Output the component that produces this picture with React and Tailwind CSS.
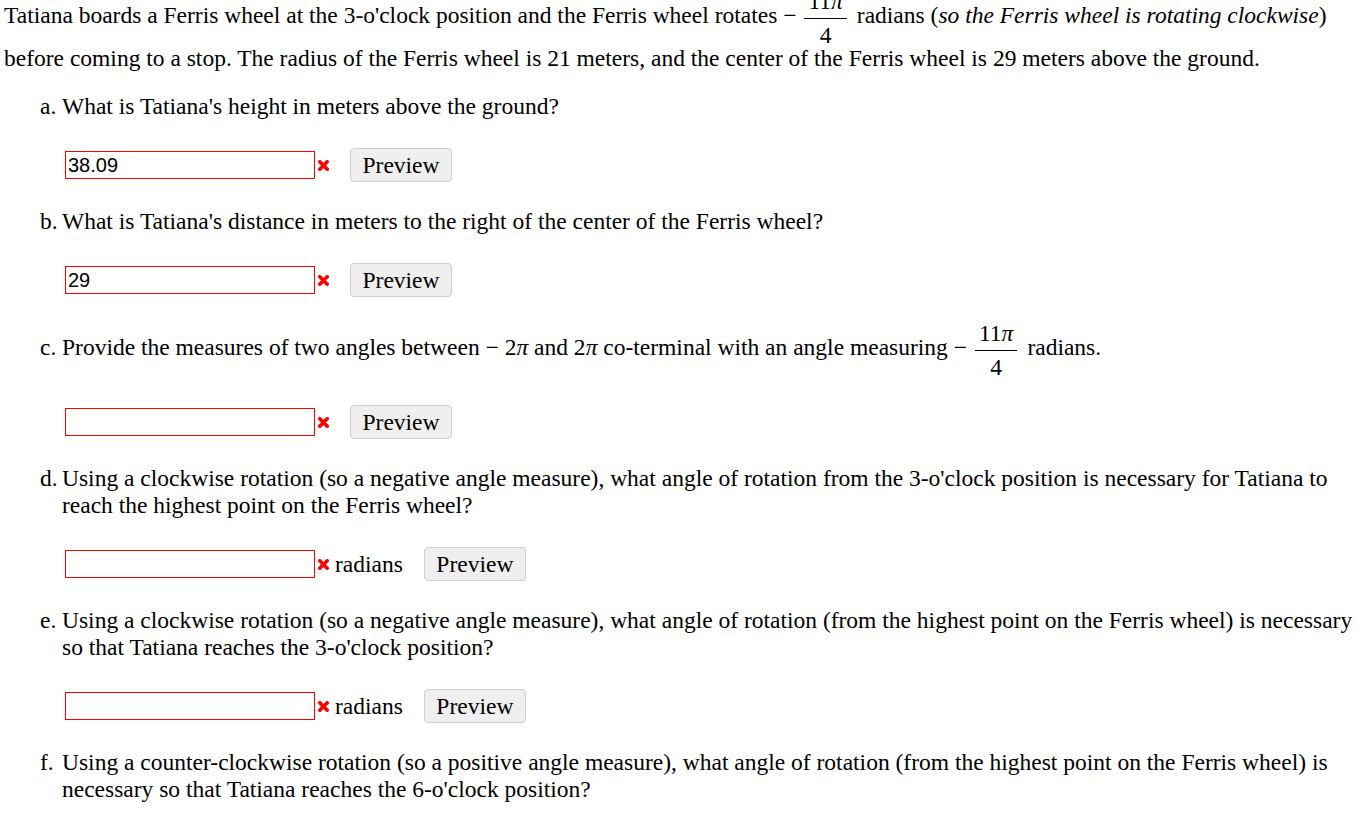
function Frac({ num, den }) {
  return (
    <span className="inline-flex flex-col items-center align-middle ml-[8px] mr-[10px]">
      <span className="block h-[20px] leading-[20px] mb-[7px] px-[4px]">{num}</span>
      <span className="block h-px w-full bg-black" />
      <span className="block h-[20px] leading-[20px] mt-[6px]">{den}</span>
    </span>
  )
}

const Pi = () => <i>π</i>

function Cross() {
  return (
    <svg width="11" height="11" viewBox="0 0 11 11" className="ml-[3px] mt-[1px]">
      <path d="M1.8 1.8 L9.2 9.2 M9.2 1.8 L1.8 9.2" stroke="#ff0000" strokeWidth="3.6" strokeLinecap="round" />
    </svg>
  )
}

function Answer({ value = '', radians = false }) {
  return (
    <div className="flex items-center ml-[3px] mt-[28px] h-[34px]">
      <input
        readOnly
        value={value}
        className="w-[250px] h-[28px] border border-[#ff0000] px-[2px] text-[20px] font-['Liberation_Sans'] text-black outline-none"
      />
      <Cross />
      {radians && <span className="ml-[6px]">radians</span>}
      <button className="ml-[21px] h-[34px] w-[102px] rounded-[4px] border border-[#cfcfcf] bg-[#efefef] text-black font-['Liberation_Serif']">
        Preview
      </button>
    </div>
  )
}

function Item({ mark, children, value, radians }) {
  return (
    <div className="flex items-baseline mt-[26px] first:mt-0">
      <span className="w-[22px] shrink-0">{mark}</span>
      <div className="flex-1">
        <p>{children}</p>
        <Answer value={value} radians={radians} />
      </div>
    </div>
  )
}

function Last({ mark, children }) {
  return (
    <div className="flex items-baseline mt-[26px]">
      <span className="w-[22px] shrink-0">{mark}</span>
      <p className="flex-1">{children}</p>
    </div>
  )
}

export default function App() {
  return (
    <div className="bg-white min-h-screen overflow-hidden font-['Liberation_Serif'] text-[23.5px] leading-[27px] text-black">
      <div className="-mt-[9px] pl-[4px]">
        <p>
          Tatiana boards a Ferris wheel at the 3-o'clock position and the Ferris wheel rotates −
          <Frac num={<>11<Pi /></>} den="4" />
          radians (<i>so the Ferris wheel is rotating clockwise</i>)
          <br />
          before coming to a stop. The radius of the Ferris wheel is 21 meters, and the center of the Ferris wheel is 29 meters above the ground.
        </p>
      </div>
      <div className="pl-[40px] pr-[8px] mt-[21px]">
        <Item mark="a." value="38.09">What is Tatiana's height in meters above the ground?</Item>
        <Item mark="b." value="29">What is Tatiana's distance in meters to the right of the center of the Ferris wheel?</Item>
        <Item mark="c.">
          Provide the measures of two angles between − 2<Pi /> and 2<Pi /> co-terminal with an angle measuring −
          <Frac num={<>11<Pi /></>} den="4" />
          radians.
        </Item>
        <Item mark="d." radians>
          Using a clockwise rotation (so a negative angle measure), what angle of rotation from the 3-o'clock position is necessary for Tatiana to reach the highest point on the Ferris wheel?
        </Item>
        <Item mark="e." radians>
          Using a clockwise rotation (so a negative angle measure), what angle of rotation (from the highest point on the Ferris wheel) is necessary so that Tatiana reaches the 3-o'clock position?
        </Item>
        <Last mark="f.">
          Using a counter-clockwise rotation (so a positive angle measure), what angle of rotation (from the highest point on the Ferris wheel) is necessary so that Tatiana reaches the 6-o'clock position?
        </Last>
      </div>
    </div>
  )
}
